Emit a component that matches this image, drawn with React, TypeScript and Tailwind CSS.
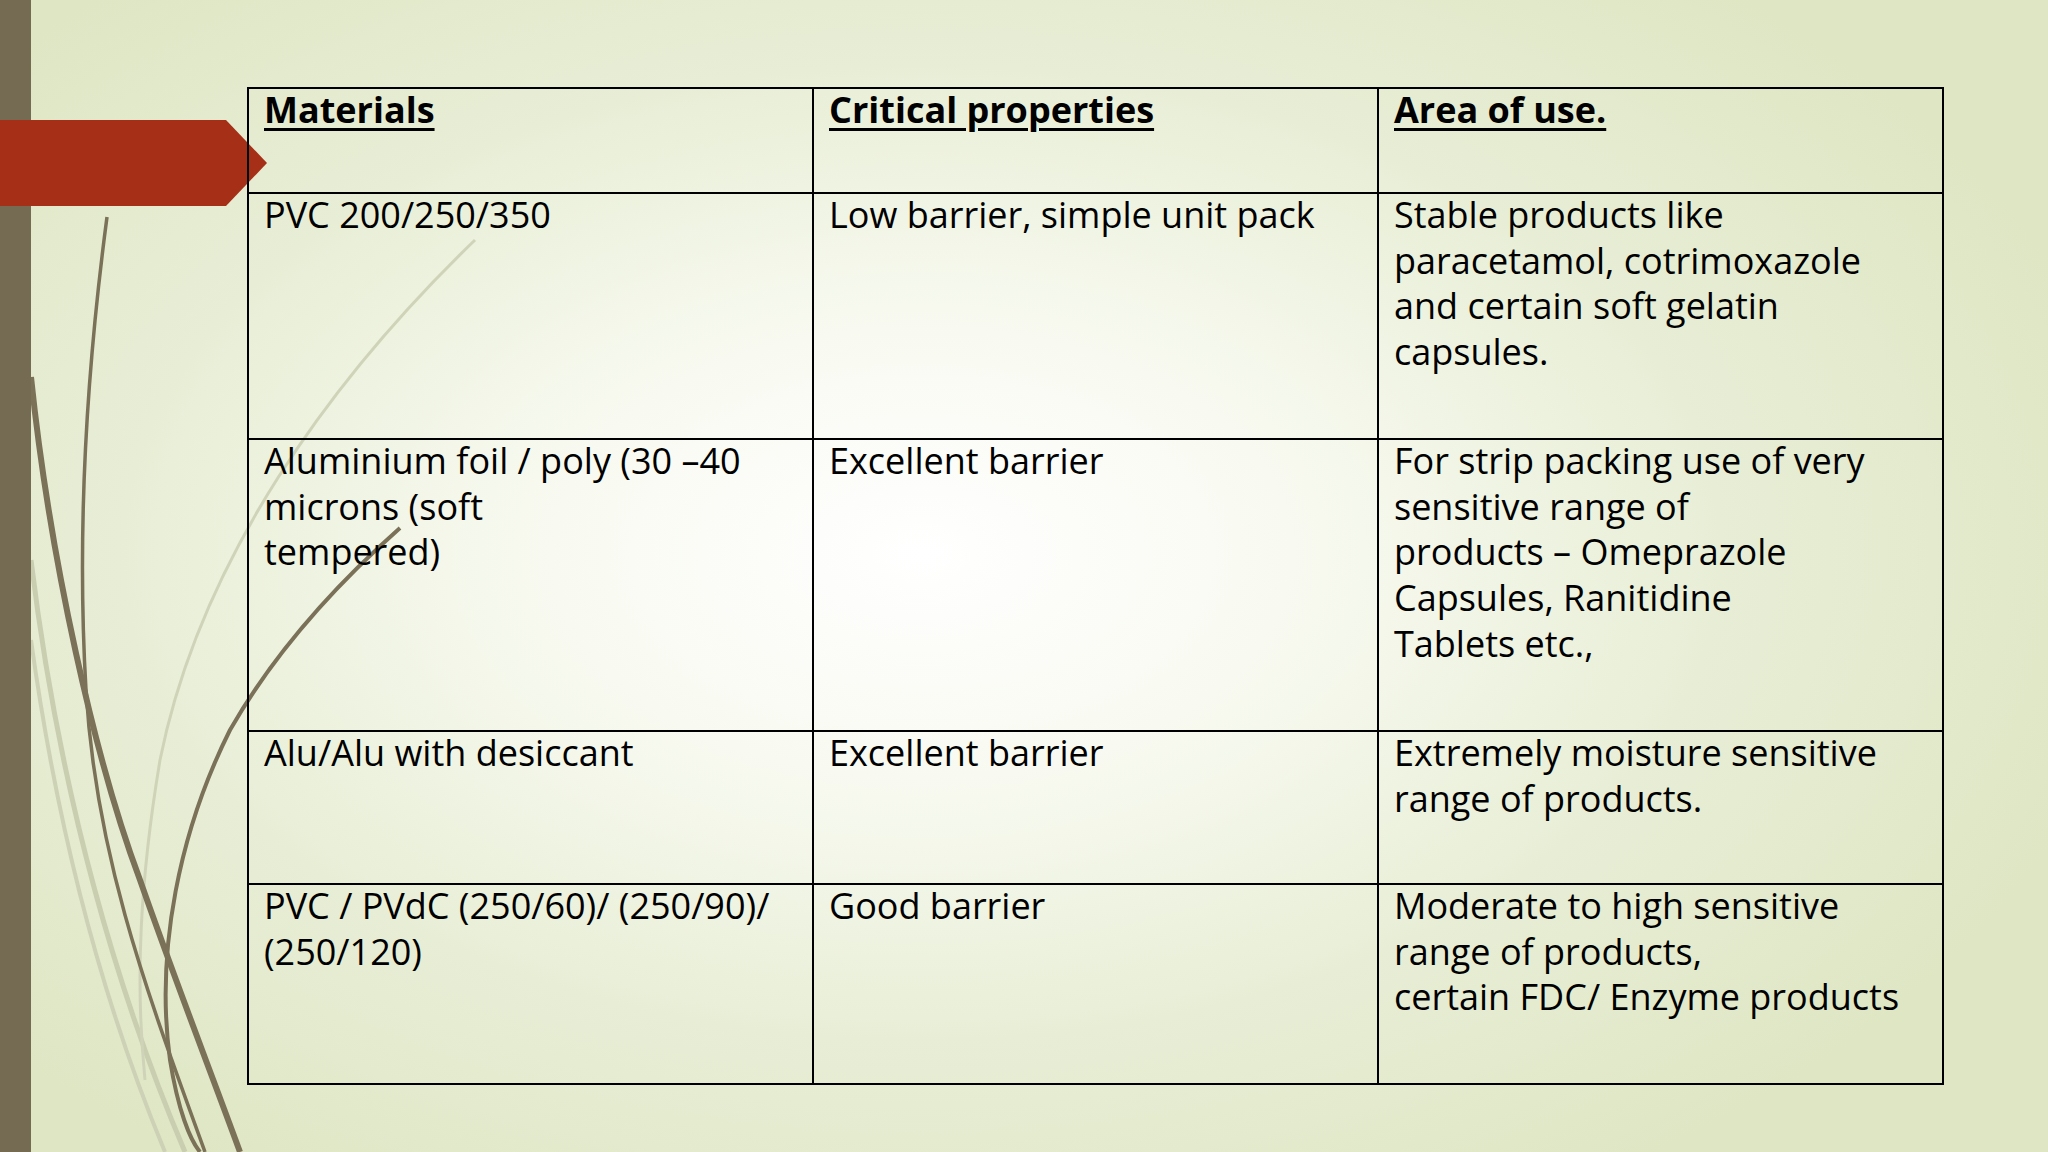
import React from 'react';

const rows: string[][] = [
	['Materials', 'Critical properties', 'Area of use.'],
	[
		'PVC 200/250/350',
		'Low barrier, simple unit pack',
		'Stable products like\nparacetamol, cotrimoxazole\nand certain soft gelatin\ncapsules.',
	],
	[
		'Aluminium foil / poly (30 \u201340\nmicrons (soft\ntempered)',
		'Excellent barrier',
		'For strip packing use of very\nsensitive range of\nproducts \u2013 Omeprazole\nCapsules, Ranitidine\nTablets etc.,',
	],
	['Alu/Alu with desiccant', 'Excellent barrier', 'Extremely moisture sensitive\nrange of products.'],
	[
		'PVC / PVdC (250/60)/ (250/90)/\n(250/120)',
		'Good barrier',
		'Moderate to high sensitive\nrange of products,\ncertain FDC/ Enzyme products',
	],
];

const rowHeights = ['h-[105px]', 'h-[246px]', 'h-[292px]', 'h-[153px]', 'h-[200px]'];

function Curves() {
	return (
		<svg
			className='absolute inset-0 w-[2048px] h-[1152px] pointer-events-none'
			viewBox='0 0 2048 1152'
			fill='none'
		>
			{/* light strands */}
			<path d='M31 560 C 60 800, 120 1000, 185 1152' stroke='#c9ceb1' strokeWidth='5' />
			<path d='M31 640 C 60 850, 110 1020, 165 1152' stroke='#cdd2b6' strokeWidth='4' />
			<path d='M475 240 C 330 380, 200 560, 160 760 C 140 880, 135 980, 145 1080' stroke='#cfd4b8' strokeWidth='3' />
			{/* dark strands */}
			<path d='M107 217 C 88 360, 76 520, 86 690 C 96 860, 150 1000, 205 1152' stroke='#7a7158' strokeWidth='3.5' />
			<path d='M31 377 C 50 560, 95 760, 140 880 C 175 980, 210 1070, 240 1152' stroke='#7a7158' strokeWidth='6' />
			<path d='M400 528 C 330 590, 270 660, 230 730 C 180 830, 155 950, 170 1060 C 178 1110, 190 1140, 200 1152' stroke='#7a7158' strokeWidth='4' />
		</svg>
	);
}

export default function App() {
	return (
		<div className='relative w-[2048px] h-[1152px] overflow-hidden bg-[radial-gradient(ellipse_60%_65%_at_45%_48%,#ffffff_0%,#f8faf1_30%,#e8eed6_65%,#dfe6c4_100%)] font-["Open_Sans",sans-serif] text-black'>
			<Curves />
			<div className='absolute left-0 top-0 w-[31px] h-full bg-[#756b53]' />
			<svg className='absolute left-0 top-[120px]' width='267' height='86' viewBox='0 0 267 86'>
				<path d='M0 0 H226 L267 43 L226 86 H0 Z' fill='#a52f17' />
			</svg>

			<div className='relative pl-[247px] pt-[87px]'>
				<div className='grid grid-cols-[565px_565px_565px] w-max border-l-2 border-t-2 border-black'>
					{rows.map((row, r) =>
						row.map((cell, c) => (
							<div
								key={`${r}-${c}`}
								className={`${rowHeights[r]} border-r-2 border-b-2 border-black px-[15px] text-[36px] leading-[45.7px] whitespace-pre-line`}
							>
								<div
									className={`-mt-[2px] ${
										r === 0 ? 'font-bold underline decoration-[3px] underline-offset-[5px]' : ''
									}`}
								>
									{cell}
								</div>
							</div>
						))
					)}
				</div>
			</div>
		</div>
	);
}
